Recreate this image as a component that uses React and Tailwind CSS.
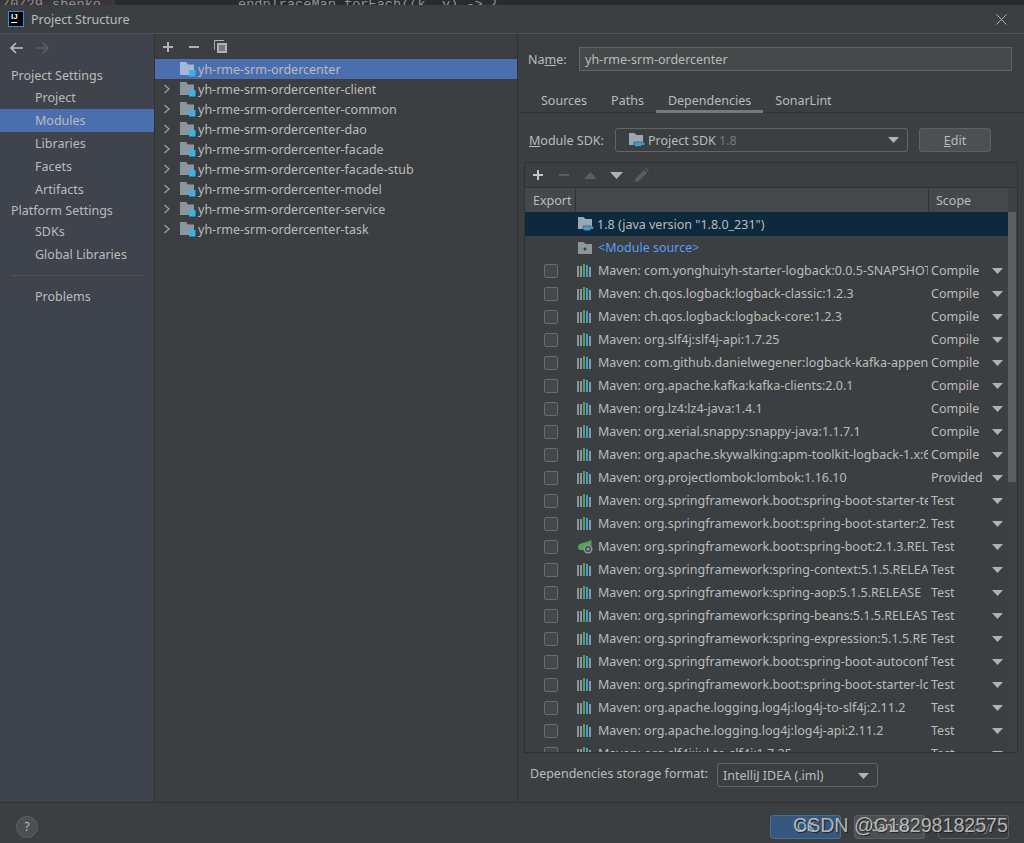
import React from 'react'

const font = "font-['Noto_Sans','Liberation_Sans',sans-serif]"

const modules = [
  'yh-rme-srm-ordercenter',
  'yh-rme-srm-ordercenter-client',
  'yh-rme-srm-ordercenter-common',
  'yh-rme-srm-ordercenter-dao',
  'yh-rme-srm-ordercenter-facade',
  'yh-rme-srm-ordercenter-facade-stub',
  'yh-rme-srm-ordercenter-model',
  'yh-rme-srm-ordercenter-service',
  'yh-rme-srm-ordercenter-task',
]

const deps = [
  ['com.yonghui:yh-starter-logback:0.0.5-SNAPSHOT', 'Compile'],
  ['ch.qos.logback:logback-classic:1.2.3', 'Compile'],
  ['ch.qos.logback:logback-core:1.2.3', 'Compile'],
  ['org.slf4j:slf4j-api:1.7.25', 'Compile'],
  ['com.github.danielwegener:logback-kafka-appender:0.2.0', 'Compile'],
  ['org.apache.kafka:kafka-clients:2.0.1', 'Compile'],
  ['org.lz4:lz4-java:1.4.1', 'Compile'],
  ['org.xerial.snappy:snappy-java:1.1.7.1', 'Compile'],
  ['org.apache.skywalking:apm-toolkit-logback-1.x:6.1.0', 'Compile'],
  ['org.projectlombok:lombok:1.16.10', 'Provided'],
  ['org.springframework.boot:spring-boot-starter-test:2.1.3', 'Test'],
  ['org.springframework.boot:spring-boot-starter:2.1.3.RELEASE', 'Test'],
  ['org.springframework.boot:spring-boot:2.1.3.RELEASE', 'Test', true],
  ['org.springframework:spring-context:5.1.5.RELEASE', 'Test'],
  ['org.springframework:spring-aop:5.1.5.RELEASE', 'Test'],
  ['org.springframework:spring-beans:5.1.5.RELEASE', 'Test'],
  ['org.springframework:spring-expression:5.1.5.RELEASE', 'Test'],
  ['org.springframework.boot:spring-boot-autoconfigure:2.1.3', 'Test'],
  ['org.springframework.boot:spring-boot-starter-logging:2.1.3', 'Test'],
  ['org.apache.logging.log4j:log4j-to-slf4j:2.11.2', 'Test'],
  ['org.apache.logging.log4j:log4j-api:2.11.2', 'Test'],
  ['org.slf4j:jul-to-slf4j:1.7.25', 'Test'],
]

const ModuleIcon = ({ light }) => (
  <svg width="16" height="16" viewBox="0 0 16 16" className="shrink-0">
    <path d="M0 1h6l2 2.5h6V14H0z" fill={light ? '#a3b8d4' : '#8a979f'} />
    <rect x="9" y="9" width="6.5" height="6.5" fill="#3cb1e3" />
  </svg>
)

const Chevron = () => (
  <svg width="8" height="10" viewBox="0 0 8 10" className="shrink-0">
    <path d="M1.5 1l4.5 4-4.5 4" fill="none" stroke="#9da0a2" strokeWidth="1.3" />
  </svg>
)

const SdkIcon = () => (
  <svg width="16" height="15" viewBox="0 0 16 15" className="shrink-0">
    <path d="M0 0h5.500l2 2H14v10H0z" fill="#9aa7b0" />
    <path d="M5 9h8v2.500c0 1-.8 2-2 2H7c-1.200 0-2-1-2-2z" fill="#3a9fd6" stroke="#3c3f41" strokeWidth=".6" />
    <path d="M13 10h2v1.500h-2" fill="none" stroke="#3a9fd6" />
  </svg>
)

const MavenIcon = () => (
  <svg width="15" height="13" viewBox="0 0 15 13" className="shrink-0">
    <rect x="0" y="2" width="2" height="11" fill="#8a979f" />
    <rect x="3" y="2" width="2" height="11" fill="#8a979f" />
    <rect x="6" y="0" width="2" height="13" fill="#59a14f" />
    <rect x="9" y="1" width="2" height="12" fill="#3a9fd6" />
    <rect x="12" y="3" width="2" height="10" fill="#8a979f" />
  </svg>
)

const SpringIcon = () => (
  <svg width="16" height="15" viewBox="0 0 16 15" className="shrink-0">
    <path d="M1 8C1 5 5 4 9 3c2-.5 4-1 5.500-2.500V6L9 11H3C2 11 1 10 1 8z" fill="#59a14f" />
    <circle cx="11" cy="10" r="4.500" fill="#8a979f" />
    <circle cx="11" cy="10" r="2.300" fill="none" stroke="#3c3f41" strokeWidth="1.200" />
  </svg>
)

const Caret = ({ color = '#afb1b3' }) => (
  <svg width="11" height="6" viewBox="0 0 11 6" className="shrink-0">
    <path d="M0 0h11L5.500 6z" fill={color} />
  </svg>
)

const Plus = ({ color = '#afb1b3' }) => (
  <svg width="12" height="12" viewBox="0 0 12 12">
    <path d="M6 1v10M1 6h10" stroke={color} strokeWidth="2" />
  </svg>
)

const Minus = ({ color = '#afb1b3' }) => (
  <svg width="12" height="12" viewBox="0 0 12 12">
    <path d="M1 6h10" stroke={color} strokeWidth="2" />
  </svg>
)

const NavItem = ({ label, active }) => (
  <div className={`h-[23px] flex items-center pl-[35px] ${active ? 'bg-[#4b6eaf]' : ''}`}>{label}</div>
)

const ToolSlot = ({ children }) => (
  <span className="w-[26px] flex items-center justify-center">{children}</span>
)

export default function App() {
  return (
    <div className={`${font} relative w-[1024px] h-[843px] overflow-hidden bg-[#3c3f41] text-[12.5px] leading-[18px] text-[#bbbbbb] flex flex-col`}>
      {/* editor behind the dialog */}
      <div className="h-[5px] shrink-0 overflow-hidden bg-[#2b2b2b] flex items-start font-['Liberation_Mono',monospace] text-[13.6px] leading-[14px] text-[#8f9193]">
        <span className="-mt-[2px] h-[14px] w-[52px] pl-[2px] bg-[#3a3537] whitespace-nowrap">/0/29</span>
        <span className="-mt-[2px] h-[14px] w-[63px] bg-[#3a3537] whitespace-nowrap">shenko</span>
        <span className="-mt-[2px] h-[14px] pl-[123px] whitespace-nowrap">endpTraceMap.forEach((k, v) -&gt; {'{'}</span>
      </div>

      {/* title bar */}
      <div className="h-[29px] shrink-0 flex items-center bg-[#3c3f41] border-b border-[#515151] pl-[8px] pr-[17px]">
        <div className="w-[16px] h-[16px] bg-black border border-[#2f8ee5] flex flex-col items-start pl-[2px] pt-[1px]">
          <span className="text-[8px] leading-[8px] font-bold text-white font-['Liberation_Sans',sans-serif]">IJ</span>
          <span className="w-[6px] h-[1px] bg-white mt-[1px]" />
        </div>
        <span className="ml-[7px] pt-[1px]">Project Structure</span>
        <svg width="11" height="11" viewBox="0 0 11 11" className="ml-auto">
          <path d="M.5.500l10 10M10.500.500l-10 10" stroke="#afb1b3" />
        </svg>
      </div>

      <div className="flex-1 min-h-0 flex">
        {/* sidebar */}
        <div className="w-[155px] shrink-0 bg-[#3e434c] border-r border-[#323232] flex flex-col">
          <div className="h-[27px] flex items-center gap-[13px] pl-[9px]">
            <svg width="14" height="12" viewBox="0 0 14 12"><path d="M14 6H2M7 1L2 6l5 5" fill="none" stroke="#bfc1c3" strokeWidth="1.600" /></svg>
            <svg width="14" height="12" viewBox="0 0 14 12"><path d="M0 6h12M7 1l5 5-5 5" fill="none" stroke="#5a5d5f" strokeWidth="1.600" /></svg>
          </div>
          <div className="h-[20px] mt-[5px] flex items-center pl-[11px]">Project Settings</div>
          <NavItem label="Project" />
          <NavItem label="Modules" active />
          <NavItem label="Libraries" />
          <NavItem label="Facets" />
          <NavItem label="Artifacts" />
          <div className="h-[19px] flex items-center pl-[11px]">Platform Settings</div>
          <NavItem label="SDKs" />
          <NavItem label="Global Libraries" />
          <div className="mx-[11px] mt-[9px] mb-[9px] h-px bg-[#515151]" />
          <NavItem label="Problems" />
        </div>

        {/* module tree */}
        <div className="w-[363px] shrink-0 border-r border-[#323232] flex flex-col">
          <div className="h-[25px] flex items-center gap-[14px] pl-[7px]">
            <Plus />
            <Minus />
            <svg width="13" height="13" viewBox="0 0 13 13">
              <path d="M.500 9.500V.500H10" fill="none" stroke="#afb1b3" />
              <path d="M3 3h10v10H3z" fill="#afb1b3" />
              <path d="M5 6h6M5 8h6M5 10h6" stroke="#3c3f41" />
            </svg>
          </div>
          {modules.map((name, i) => (
            <div key={name} className={`h-[20px] flex items-center pl-[8px] ${i === 0 ? 'bg-[#4b6eaf]' : ''}`}>
              <span className="w-[17px] flex">{i > 0 && <Chevron />}</span>
              <ModuleIcon light={i === 0} />
              <span className="ml-[2px] pt-[1px] whitespace-nowrap">{name}</span>
            </div>
          ))}
        </div>

        {/* module detail */}
        <div className="flex-1 min-w-0 flex flex-col">
          <div className="mt-[13px] h-[24px] flex items-center pl-[10px] pr-[12px]">
            <span className="w-[51px] pt-[1px]">Na<span className="underline">m</span>e:</span>
            <div className="flex-1 h-[24px] bg-[#45494a] border border-[#646464] flex items-center pl-[5px] pt-[1px]">yh-rme-srm-ordercenter</div>
          </div>

          <div className="mt-[17px] h-[25px] border-b border-[#323232] flex pl-[11px]">
            {['Sources', 'Paths', 'Dependencies', 'SonarLint'].map((tab) => (
              <div key={tab} className={`h-[25px] px-[12px] pt-[4px] ${tab === 'Dependencies' ? 'border-b-[3px] border-[#747a80]' : ''}`}>{tab}</div>
            ))}
          </div>

          <div className="mt-[15px] h-[24px] flex items-center pl-[11px]">
            <span className="w-[86px] pt-[1px]"><span className="underline">M</span>odule SDK:</span>
            <div className="w-[293px] h-[24px] rounded-[3px] border border-[#646464] flex items-center pl-[13px] pr-[8px]">
              <SdkIcon />
              <span className="ml-[3px] pt-[1px]">Project SDK <span className="text-[#787878]">1.8</span></span>
              <span className="ml-auto"><Caret /></span>
            </div>
            <div className="ml-[11px] w-[72px] h-[24px] rounded-[3px] border border-[#5e6060] bg-[#4c5052] flex items-center justify-center pt-[2px]"><span><span className="underline">E</span>dit</span></div>
          </div>

          {/* dependencies table */}
          <div className="mt-[10px] mx-[6px] h-[591px] shrink-0 border border-[#323232] flex flex-col overflow-hidden">
            <div className="h-[25px] shrink-0 flex items-center border-b border-[#323232]">
              <ToolSlot><Plus color="#c4c6c8" /></ToolSlot>
              <ToolSlot><Minus color="#5a5d5f" /></ToolSlot>
              <ToolSlot><svg width="13" height="7" viewBox="0 0 13 7"><path d="M0 7h13L6.500 0z" fill="#5a5d5f" /></svg></ToolSlot>
              <ToolSlot><svg width="13" height="7" viewBox="0 0 13 7"><path d="M0 0h13L6.500 7z" fill="#afb1b3" /></svg></ToolSlot>
              <ToolSlot><svg width="14" height="14" viewBox="0 0 14 14"><path d="M0 14l1-4 8-8 3 3-8 8zM10 1l1-1 3 3-1 1z" fill="#5a5d5f" /></svg></ToolSlot>
            </div>
            <div className="h-[24px] shrink-0 flex items-center bg-[#45484a]">
              <span className="w-[51px] pl-[8px] pt-[1px] border-r border-[#323232] h-[22px] flex items-center">Export</span>
              <span className="w-[353px] border-r border-[#323232] h-[22px]" />
              <span className="pl-[7px] pt-[1px]">Scope</span>
              <span className="ml-auto w-[9px] h-[24px] bg-[#3f4244]" />
            </div>
            <div className="flex-1 min-h-0 flex">
              <div className="flex-1 min-w-0 overflow-hidden">
                <div className="h-[24px] flex items-center bg-[#0d293e] pl-[53px]">
                  <SdkIcon />
                  <span className="ml-[3px] pt-[1px]">1.8 (java version "1.8.0_231")</span>
                </div>
                <div className="h-[23px] flex items-center pl-[53px]">
                  <svg width="14" height="12" viewBox="0 0 14 12" className="shrink-0">
                    <path d="M0 0h5.500l2 2H14v10H0z" fill="#8a979f" />
                    <circle cx="7" cy="7" r="1.500" fill="#3c3f41" />
                  </svg>
                  <span className="ml-[6px] text-[#589df6]">&lt;Module source&gt;</span>
                </div>
                {deps.map(([name, scope, spring]) => (
                  <div key={name} className="h-[23px] flex items-center">
                    <span className="w-[52px] shrink-0 pl-[19px]">
                      <span className="block w-[14px] h-[14px] rounded-[2px] bg-[#43494a] border border-[#6b6b6b]" />
                    </span>
                    <span className="w-[16px] shrink-0 flex justify-start">{spring ? <SpringIcon /> : <MavenIcon />}</span>
                    <span className="w-[335px] pl-[5px] shrink-0 overflow-hidden whitespace-nowrap">Maven: {name}</span>
                    <span className="w-[64px] shrink-0 pl-[3px]">{scope}</span>
                    <Caret />
                  </div>
                ))}
              </div>
              <div className="w-[9px] shrink-0 bg-[#3f4244]">
                <div className="h-[270px] w-[8px] bg-[#5b5f60]" />
              </div>
            </div>
          </div>

          <div className="mt-[10px] h-[24px] flex items-center pl-[12px]">
            <span className="w-[187px] -mt-[3px] whitespace-nowrap">Dependencies storage format:</span>
            <div className="w-[161px] h-[24px] rounded-[3px] border border-[#646464] flex items-center pl-[5px] pr-[8px] pt-[1px]">
              IntelliJ IDEA (.iml)
              <span className="ml-auto"><Caret /></span>
            </div>
          </div>
        </div>
      </div>

      {/* footer */}
      <div className="h-[41px] shrink-0 border-t border-[#323232] flex items-center pl-[16px] pr-[15px] pt-[8px]">
        <div className="w-[22px] h-[22px] rounded-full bg-[#4c5052] border border-[#5e6060] flex items-center justify-center text-[12px]">?</div>
        <div className="ml-auto w-[71px] h-[24px] rounded-[3px] bg-[#365880] border border-[#4c708c] flex items-center justify-center">OK</div>
        <div className="ml-[13px] w-[71px] h-[24px] rounded-[3px] bg-[#4c5052] border border-[#5e6060] flex items-center justify-center">Cancel</div>
        <div className="ml-[13px] w-[71px] h-[24px] rounded-[3px] border border-[#5e6060] flex items-center justify-center text-[#787878]">Apply</div>
      </div>

      {/* CSDN watermark */}
      <div className="absolute left-[793px] top-[814px] font-['Liberation_Sans',sans-serif] text-[19.6px] leading-[22px] whitespace-nowrap text-[#d8d8d8]/80 [text-shadow:1px_1px_1px_#222222]">CSDN @C18298182575</div>
    </div>
  )
}
